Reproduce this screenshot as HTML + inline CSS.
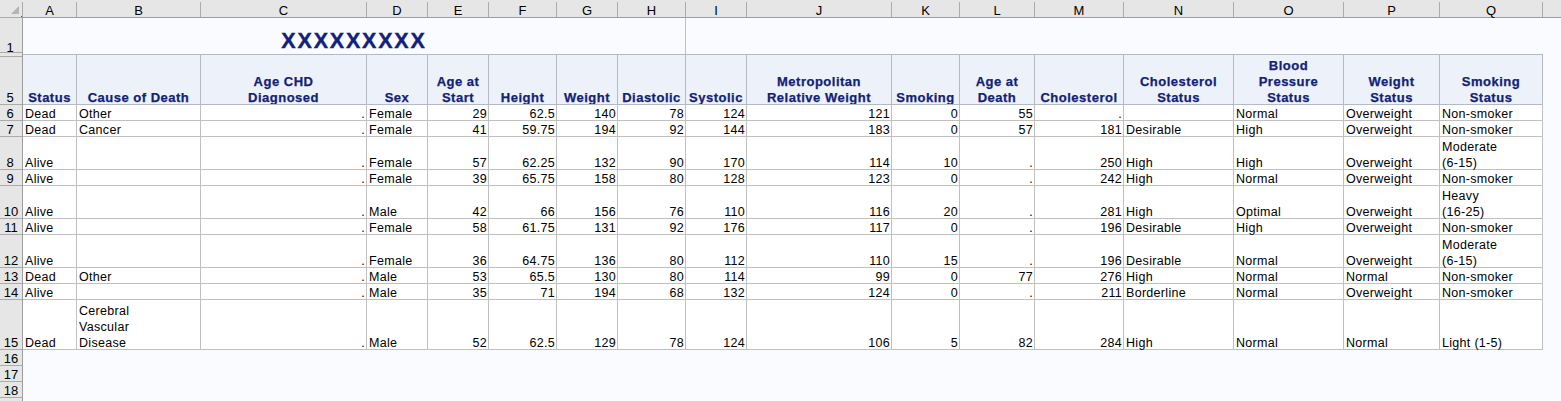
<!DOCTYPE html>
<html><head><meta charset="utf-8"><style>
html,body{margin:0;padding:0;}
body{width:1561px;height:401px;overflow:hidden;position:relative;background:#fafbfe;font-family:"Liberation Sans",sans-serif;}
div{position:absolute;}
.t{white-space:pre;line-height:20px;margin-top:-15px;}
.dat{font-size:12.5px;letter-spacing:0.3px;color:#000;transform:translateY(1px);}
.hdr{font-size:13px;letter-spacing:0.5px;color:#112277;font-weight:bold;transform:translateY(1px);-webkit-text-stroke:0.25px #112277;}
.title{font-size:21.5px;letter-spacing:1.8px;color:#112277;font-weight:bold;transform:translateY(-2px);-webkit-text-stroke:0.4px #112277;}
.lab{font-size:13px;color:#000;transform:translateY(1px);}
</style></head>
<body>
<div style="left:0px;top:0px;width:1561px;height:17px;background:#e6e6e6;"></div>
<div style="left:0px;top:17px;width:22px;height:1px;background:#ababab;"></div>
<div style="left:22px;top:17px;width:1539px;height:1px;background:#9c9c9c;"></div>
<div style="left:0px;top:18px;width:22px;height:383px;background:#e6e6e6;"></div>
<div style="left:22px;top:17px;width:1px;height:384px;background:#9c9c9c;"></div>
<div style="left:23px;top:18px;width:1538px;height:383px;background:#fafbfe;"></div>
<svg style="position:absolute;left:0;top:0" width="22" height="17"><polygon points="19,6 19,14 11,14" fill="#b4b4b4"/><rect x="21" y="16" width="1" height="1" fill="#217346"/></svg>
<div style="left:22px;top:2px;width:1px;height:15px;background:#ababab;"></div>
<div style="left:76px;top:2px;width:1px;height:15px;background:#ababab;"></div>
<div class="t lab" style="top:15px;left:-150.5px;width:400px;text-align:center;">A</div>
<div style="left:200px;top:2px;width:1px;height:15px;background:#ababab;"></div>
<div class="t lab" style="top:15px;left:-61.5px;width:400px;text-align:center;">B</div>
<div style="left:366px;top:2px;width:1px;height:15px;background:#ababab;"></div>
<div class="t lab" style="top:15px;left:83.5px;width:400px;text-align:center;">C</div>
<div style="left:427px;top:2px;width:1px;height:15px;background:#ababab;"></div>
<div class="t lab" style="top:15px;left:197.0px;width:400px;text-align:center;">D</div>
<div style="left:488px;top:2px;width:1px;height:15px;background:#ababab;"></div>
<div class="t lab" style="top:15px;left:258.0px;width:400px;text-align:center;">E</div>
<div style="left:556px;top:2px;width:1px;height:15px;background:#ababab;"></div>
<div class="t lab" style="top:15px;left:322.5px;width:400px;text-align:center;">F</div>
<div style="left:617px;top:2px;width:1px;height:15px;background:#ababab;"></div>
<div class="t lab" style="top:15px;left:387.0px;width:400px;text-align:center;">G</div>
<div style="left:685px;top:2px;width:1px;height:15px;background:#ababab;"></div>
<div class="t lab" style="top:15px;left:451.5px;width:400px;text-align:center;">H</div>
<div style="left:746px;top:2px;width:1px;height:15px;background:#ababab;"></div>
<div class="t lab" style="top:15px;left:516.0px;width:400px;text-align:center;">I</div>
<div style="left:891px;top:2px;width:1px;height:15px;background:#ababab;"></div>
<div class="t lab" style="top:15px;left:619.0px;width:400px;text-align:center;">J</div>
<div style="left:959px;top:2px;width:1px;height:15px;background:#ababab;"></div>
<div class="t lab" style="top:15px;left:725.5px;width:400px;text-align:center;">K</div>
<div style="left:1034px;top:2px;width:1px;height:15px;background:#ababab;"></div>
<div class="t lab" style="top:15px;left:797.0px;width:400px;text-align:center;">L</div>
<div style="left:1123px;top:2px;width:1px;height:15px;background:#ababab;"></div>
<div class="t lab" style="top:15px;left:879.0px;width:400px;text-align:center;">M</div>
<div style="left:1233px;top:2px;width:1px;height:15px;background:#ababab;"></div>
<div class="t lab" style="top:15px;left:978.5px;width:400px;text-align:center;">N</div>
<div style="left:1343px;top:2px;width:1px;height:15px;background:#ababab;"></div>
<div class="t lab" style="top:15px;left:1088.5px;width:400px;text-align:center;">O</div>
<div style="left:1439px;top:2px;width:1px;height:15px;background:#ababab;"></div>
<div class="t lab" style="top:15px;left:1191.5px;width:400px;text-align:center;">P</div>
<div style="left:1542px;top:2px;width:1px;height:15px;background:#ababab;"></div>
<div class="t lab" style="top:15px;left:1291.0px;width:400px;text-align:center;">Q</div>
<div style="left:0px;top:52px;width:22px;height:1px;background:#ababab;"></div>
<div style="left:0px;top:56px;width:22px;height:1px;background:#ababab;"></div>
<div class="t lab" style="top:52px;left:-190px;width:400px;text-align:center;">1</div>
<div style="left:0px;top:104px;width:22px;height:1px;background:#ababab;"></div>
<div class="t lab" style="top:102px;left:-190px;width:400px;text-align:center;">5</div>
<div style="left:0px;top:120px;width:22px;height:1px;background:#ababab;"></div>
<div class="t lab" style="top:118px;left:-190px;width:400px;text-align:center;">6</div>
<div style="left:0px;top:136px;width:22px;height:1px;background:#ababab;"></div>
<div class="t lab" style="top:134px;left:-190px;width:400px;text-align:center;">7</div>
<div style="left:0px;top:169px;width:22px;height:1px;background:#ababab;"></div>
<div class="t lab" style="top:167px;left:-190px;width:400px;text-align:center;">8</div>
<div style="left:0px;top:185px;width:22px;height:1px;background:#ababab;"></div>
<div class="t lab" style="top:183px;left:-190px;width:400px;text-align:center;">9</div>
<div style="left:0px;top:218px;width:22px;height:1px;background:#ababab;"></div>
<div class="t lab" style="top:216px;left:-189px;width:400px;text-align:center;">10</div>
<div style="left:0px;top:234px;width:22px;height:1px;background:#ababab;"></div>
<div class="t lab" style="top:232px;left:-189px;width:400px;text-align:center;">11</div>
<div style="left:0px;top:267px;width:22px;height:1px;background:#ababab;"></div>
<div class="t lab" style="top:265px;left:-189px;width:400px;text-align:center;">12</div>
<div style="left:0px;top:283px;width:22px;height:1px;background:#ababab;"></div>
<div class="t lab" style="top:281px;left:-189px;width:400px;text-align:center;">13</div>
<div style="left:0px;top:299px;width:22px;height:1px;background:#ababab;"></div>
<div class="t lab" style="top:297px;left:-189px;width:400px;text-align:center;">14</div>
<div style="left:0px;top:349px;width:22px;height:1px;background:#ababab;"></div>
<div class="t lab" style="top:347px;left:-189px;width:400px;text-align:center;">15</div>
<div style="left:0px;top:365px;width:22px;height:1px;background:#ababab;"></div>
<div class="t lab" style="top:363px;left:-189px;width:400px;text-align:center;">16</div>
<div style="left:0px;top:381px;width:22px;height:1px;background:#ababab;"></div>
<div class="t lab" style="top:379px;left:-189px;width:400px;text-align:center;">17</div>
<div style="left:0px;top:397px;width:22px;height:1px;background:#ababab;"></div>
<div class="t lab" style="top:395px;left:-189px;width:400px;text-align:center;">18</div>
<div style="left:23px;top:18px;width:1519px;height:36px;background:#fafbfe;"></div>
<div style="left:23px;top:54px;width:1520px;height:1px;background:#b3bac1;"></div>
<div style="left:685px;top:18px;width:1px;height:36px;background:#c0c0c0;"></div>
<div class="t title" style="top:48px;left:154.0px;width:400px;text-align:center;">XXXXXXXXX</div>
<div style="left:23px;top:55px;width:1519px;height:49px;background:#edf1f9;"></div>
<div class="t hdr" style="top:102px;left:-150.5px;width:400px;text-align:center;">Status</div>
<div class="t hdr" style="top:102px;left:-61.5px;width:400px;text-align:center;">Cause of Death</div>
<div class="t hdr" style="top:86px;left:83.5px;width:400px;text-align:center;">Age CHD</div>
<div class="t hdr" style="top:102px;left:83.5px;width:400px;text-align:center;">Diagnosed</div>
<div class="t hdr" style="top:102px;left:197.0px;width:400px;text-align:center;">Sex</div>
<div class="t hdr" style="top:86px;left:258.0px;width:400px;text-align:center;">Age at</div>
<div class="t hdr" style="top:102px;left:258.0px;width:400px;text-align:center;">Start</div>
<div class="t hdr" style="top:102px;left:322.5px;width:400px;text-align:center;">Height</div>
<div class="t hdr" style="top:102px;left:387.0px;width:400px;text-align:center;">Weight</div>
<div class="t hdr" style="top:102px;left:451.5px;width:400px;text-align:center;">Diastolic</div>
<div class="t hdr" style="top:102px;left:516.0px;width:400px;text-align:center;">Systolic</div>
<div class="t hdr" style="top:86px;left:619.0px;width:400px;text-align:center;">Metropolitan</div>
<div class="t hdr" style="top:102px;left:619.0px;width:400px;text-align:center;">Relative Weight</div>
<div class="t hdr" style="top:102px;left:725.5px;width:400px;text-align:center;">Smoking</div>
<div class="t hdr" style="top:86px;left:797.0px;width:400px;text-align:center;">Age at</div>
<div class="t hdr" style="top:102px;left:797.0px;width:400px;text-align:center;">Death</div>
<div class="t hdr" style="top:102px;left:879.0px;width:400px;text-align:center;">Cholesterol</div>
<div class="t hdr" style="top:86px;left:978.5px;width:400px;text-align:center;">Cholesterol</div>
<div class="t hdr" style="top:102px;left:978.5px;width:400px;text-align:center;">Status</div>
<div class="t hdr" style="top:70px;left:1088.5px;width:400px;text-align:center;">Blood</div>
<div class="t hdr" style="top:86px;left:1088.5px;width:400px;text-align:center;">Pressure</div>
<div class="t hdr" style="top:102px;left:1088.5px;width:400px;text-align:center;">Status</div>
<div class="t hdr" style="top:86px;left:1191.5px;width:400px;text-align:center;">Weight</div>
<div class="t hdr" style="top:102px;left:1191.5px;width:400px;text-align:center;">Status</div>
<div class="t hdr" style="top:86px;left:1291.0px;width:400px;text-align:center;">Smoking</div>
<div class="t hdr" style="top:102px;left:1291.0px;width:400px;text-align:center;">Status</div>
<div style="left:23px;top:105px;width:1519px;height:244px;background:#ffffff;"></div>
<div style="left:23px;top:120px;width:1520px;height:1px;background:#c0c0c0;"></div>
<div style="left:23px;top:136px;width:1520px;height:1px;background:#c0c0c0;"></div>
<div style="left:23px;top:169px;width:1520px;height:1px;background:#c0c0c0;"></div>
<div style="left:23px;top:185px;width:1520px;height:1px;background:#c0c0c0;"></div>
<div style="left:23px;top:218px;width:1520px;height:1px;background:#c0c0c0;"></div>
<div style="left:23px;top:234px;width:1520px;height:1px;background:#c0c0c0;"></div>
<div style="left:23px;top:267px;width:1520px;height:1px;background:#c0c0c0;"></div>
<div style="left:23px;top:283px;width:1520px;height:1px;background:#c0c0c0;"></div>
<div style="left:23px;top:299px;width:1520px;height:1px;background:#c0c0c0;"></div>
<div style="left:23px;top:349px;width:1520px;height:1px;background:#c0c0c0;"></div>
<div style="left:76px;top:105px;width:1px;height:244px;background:#c0c0c0;"></div>
<div style="left:76px;top:55px;width:1px;height:49px;background:#b3bac1;"></div>
<div style="left:200px;top:105px;width:1px;height:244px;background:#c0c0c0;"></div>
<div style="left:200px;top:55px;width:1px;height:49px;background:#b3bac1;"></div>
<div style="left:366px;top:105px;width:1px;height:244px;background:#c0c0c0;"></div>
<div style="left:366px;top:55px;width:1px;height:49px;background:#b3bac1;"></div>
<div style="left:427px;top:105px;width:1px;height:244px;background:#c0c0c0;"></div>
<div style="left:427px;top:55px;width:1px;height:49px;background:#b3bac1;"></div>
<div style="left:488px;top:105px;width:1px;height:244px;background:#c0c0c0;"></div>
<div style="left:488px;top:55px;width:1px;height:49px;background:#b3bac1;"></div>
<div style="left:556px;top:105px;width:1px;height:244px;background:#c0c0c0;"></div>
<div style="left:556px;top:55px;width:1px;height:49px;background:#b3bac1;"></div>
<div style="left:617px;top:105px;width:1px;height:244px;background:#c0c0c0;"></div>
<div style="left:617px;top:55px;width:1px;height:49px;background:#b3bac1;"></div>
<div style="left:685px;top:105px;width:1px;height:244px;background:#c0c0c0;"></div>
<div style="left:685px;top:55px;width:1px;height:49px;background:#b3bac1;"></div>
<div style="left:746px;top:105px;width:1px;height:244px;background:#c0c0c0;"></div>
<div style="left:746px;top:55px;width:1px;height:49px;background:#b3bac1;"></div>
<div style="left:891px;top:105px;width:1px;height:244px;background:#c0c0c0;"></div>
<div style="left:891px;top:55px;width:1px;height:49px;background:#b3bac1;"></div>
<div style="left:959px;top:105px;width:1px;height:244px;background:#c0c0c0;"></div>
<div style="left:959px;top:55px;width:1px;height:49px;background:#b3bac1;"></div>
<div style="left:1034px;top:105px;width:1px;height:244px;background:#c0c0c0;"></div>
<div style="left:1034px;top:55px;width:1px;height:49px;background:#b3bac1;"></div>
<div style="left:1123px;top:105px;width:1px;height:244px;background:#c0c0c0;"></div>
<div style="left:1123px;top:55px;width:1px;height:49px;background:#b3bac1;"></div>
<div style="left:1233px;top:105px;width:1px;height:244px;background:#c0c0c0;"></div>
<div style="left:1233px;top:55px;width:1px;height:49px;background:#b3bac1;"></div>
<div style="left:1343px;top:105px;width:1px;height:244px;background:#c0c0c0;"></div>
<div style="left:1343px;top:55px;width:1px;height:49px;background:#b3bac1;"></div>
<div style="left:1439px;top:105px;width:1px;height:244px;background:#c0c0c0;"></div>
<div style="left:1439px;top:55px;width:1px;height:49px;background:#b3bac1;"></div>
<div style="left:1542px;top:105px;width:1px;height:244px;background:#c0c0c0;"></div>
<div style="left:1542px;top:55px;width:1px;height:49px;background:#b3bac1;"></div>
<div style="left:23px;top:104px;width:1520px;height:1px;background:#b3bac1;"></div>
<div class="t dat" style="top:118px;left:25px;">Dead</div>
<div class="t dat" style="top:118px;left:79px;">Other</div>
<div class="t dat" style="top:118px;right:1196px;">.</div>
<div class="t dat" style="top:118px;left:369px;">Female</div>
<div class="t dat" style="top:118px;right:1074px;">29</div>
<div class="t dat" style="top:118px;right:1006px;">62.5</div>
<div class="t dat" style="top:118px;right:945px;">140</div>
<div class="t dat" style="top:118px;right:877px;">78</div>
<div class="t dat" style="top:118px;right:816px;">124</div>
<div class="t dat" style="top:118px;right:671px;">121</div>
<div class="t dat" style="top:118px;right:603px;">0</div>
<div class="t dat" style="top:118px;right:528px;">55</div>
<div class="t dat" style="top:118px;right:439px;">.</div>
<div class="t dat" style="top:118px;left:1236px;">Normal</div>
<div class="t dat" style="top:118px;left:1346px;">Overweight</div>
<div class="t dat" style="top:118px;left:1442px;">Non-smoker</div>
<div class="t dat" style="top:134px;left:25px;">Dead</div>
<div class="t dat" style="top:134px;left:79px;">Cancer</div>
<div class="t dat" style="top:134px;right:1196px;">.</div>
<div class="t dat" style="top:134px;left:369px;">Female</div>
<div class="t dat" style="top:134px;right:1074px;">41</div>
<div class="t dat" style="top:134px;right:1006px;">59.75</div>
<div class="t dat" style="top:134px;right:945px;">194</div>
<div class="t dat" style="top:134px;right:877px;">92</div>
<div class="t dat" style="top:134px;right:816px;">144</div>
<div class="t dat" style="top:134px;right:671px;">183</div>
<div class="t dat" style="top:134px;right:603px;">0</div>
<div class="t dat" style="top:134px;right:528px;">57</div>
<div class="t dat" style="top:134px;right:439px;">181</div>
<div class="t dat" style="top:134px;left:1126px;">Desirable</div>
<div class="t dat" style="top:134px;left:1236px;">High</div>
<div class="t dat" style="top:134px;left:1346px;">Overweight</div>
<div class="t dat" style="top:134px;left:1442px;">Non-smoker</div>
<div class="t dat" style="top:167px;left:25px;">Alive</div>
<div class="t dat" style="top:167px;right:1196px;">.</div>
<div class="t dat" style="top:167px;left:369px;">Female</div>
<div class="t dat" style="top:167px;right:1074px;">57</div>
<div class="t dat" style="top:167px;right:1006px;">62.25</div>
<div class="t dat" style="top:167px;right:945px;">132</div>
<div class="t dat" style="top:167px;right:877px;">90</div>
<div class="t dat" style="top:167px;right:816px;">170</div>
<div class="t dat" style="top:167px;right:671px;">114</div>
<div class="t dat" style="top:167px;right:603px;">10</div>
<div class="t dat" style="top:167px;right:528px;">.</div>
<div class="t dat" style="top:167px;right:439px;">250</div>
<div class="t dat" style="top:167px;left:1126px;">High</div>
<div class="t dat" style="top:167px;left:1236px;">High</div>
<div class="t dat" style="top:167px;left:1346px;">Overweight</div>
<div class="t dat" style="top:151px;left:1442px;">Moderate</div>
<div class="t dat" style="top:167px;left:1442px;">(6-15)</div>
<div class="t dat" style="top:183px;left:25px;">Alive</div>
<div class="t dat" style="top:183px;right:1196px;">.</div>
<div class="t dat" style="top:183px;left:369px;">Female</div>
<div class="t dat" style="top:183px;right:1074px;">39</div>
<div class="t dat" style="top:183px;right:1006px;">65.75</div>
<div class="t dat" style="top:183px;right:945px;">158</div>
<div class="t dat" style="top:183px;right:877px;">80</div>
<div class="t dat" style="top:183px;right:816px;">128</div>
<div class="t dat" style="top:183px;right:671px;">123</div>
<div class="t dat" style="top:183px;right:603px;">0</div>
<div class="t dat" style="top:183px;right:528px;">.</div>
<div class="t dat" style="top:183px;right:439px;">242</div>
<div class="t dat" style="top:183px;left:1126px;">High</div>
<div class="t dat" style="top:183px;left:1236px;">Normal</div>
<div class="t dat" style="top:183px;left:1346px;">Overweight</div>
<div class="t dat" style="top:183px;left:1442px;">Non-smoker</div>
<div class="t dat" style="top:216px;left:25px;">Alive</div>
<div class="t dat" style="top:216px;right:1196px;">.</div>
<div class="t dat" style="top:216px;left:369px;">Male</div>
<div class="t dat" style="top:216px;right:1074px;">42</div>
<div class="t dat" style="top:216px;right:1006px;">66</div>
<div class="t dat" style="top:216px;right:945px;">156</div>
<div class="t dat" style="top:216px;right:877px;">76</div>
<div class="t dat" style="top:216px;right:816px;">110</div>
<div class="t dat" style="top:216px;right:671px;">116</div>
<div class="t dat" style="top:216px;right:603px;">20</div>
<div class="t dat" style="top:216px;right:528px;">.</div>
<div class="t dat" style="top:216px;right:439px;">281</div>
<div class="t dat" style="top:216px;left:1126px;">High</div>
<div class="t dat" style="top:216px;left:1236px;">Optimal</div>
<div class="t dat" style="top:216px;left:1346px;">Overweight</div>
<div class="t dat" style="top:200px;left:1442px;">Heavy</div>
<div class="t dat" style="top:216px;left:1442px;">(16-25)</div>
<div class="t dat" style="top:232px;left:25px;">Alive</div>
<div class="t dat" style="top:232px;right:1196px;">.</div>
<div class="t dat" style="top:232px;left:369px;">Female</div>
<div class="t dat" style="top:232px;right:1074px;">58</div>
<div class="t dat" style="top:232px;right:1006px;">61.75</div>
<div class="t dat" style="top:232px;right:945px;">131</div>
<div class="t dat" style="top:232px;right:877px;">92</div>
<div class="t dat" style="top:232px;right:816px;">176</div>
<div class="t dat" style="top:232px;right:671px;">117</div>
<div class="t dat" style="top:232px;right:603px;">0</div>
<div class="t dat" style="top:232px;right:528px;">.</div>
<div class="t dat" style="top:232px;right:439px;">196</div>
<div class="t dat" style="top:232px;left:1126px;">Desirable</div>
<div class="t dat" style="top:232px;left:1236px;">High</div>
<div class="t dat" style="top:232px;left:1346px;">Overweight</div>
<div class="t dat" style="top:232px;left:1442px;">Non-smoker</div>
<div class="t dat" style="top:265px;left:25px;">Alive</div>
<div class="t dat" style="top:265px;right:1196px;">.</div>
<div class="t dat" style="top:265px;left:369px;">Female</div>
<div class="t dat" style="top:265px;right:1074px;">36</div>
<div class="t dat" style="top:265px;right:1006px;">64.75</div>
<div class="t dat" style="top:265px;right:945px;">136</div>
<div class="t dat" style="top:265px;right:877px;">80</div>
<div class="t dat" style="top:265px;right:816px;">112</div>
<div class="t dat" style="top:265px;right:671px;">110</div>
<div class="t dat" style="top:265px;right:603px;">15</div>
<div class="t dat" style="top:265px;right:528px;">.</div>
<div class="t dat" style="top:265px;right:439px;">196</div>
<div class="t dat" style="top:265px;left:1126px;">Desirable</div>
<div class="t dat" style="top:265px;left:1236px;">Normal</div>
<div class="t dat" style="top:265px;left:1346px;">Overweight</div>
<div class="t dat" style="top:249px;left:1442px;">Moderate</div>
<div class="t dat" style="top:265px;left:1442px;">(6-15)</div>
<div class="t dat" style="top:281px;left:25px;">Dead</div>
<div class="t dat" style="top:281px;left:79px;">Other</div>
<div class="t dat" style="top:281px;right:1196px;">.</div>
<div class="t dat" style="top:281px;left:369px;">Male</div>
<div class="t dat" style="top:281px;right:1074px;">53</div>
<div class="t dat" style="top:281px;right:1006px;">65.5</div>
<div class="t dat" style="top:281px;right:945px;">130</div>
<div class="t dat" style="top:281px;right:877px;">80</div>
<div class="t dat" style="top:281px;right:816px;">114</div>
<div class="t dat" style="top:281px;right:671px;">99</div>
<div class="t dat" style="top:281px;right:603px;">0</div>
<div class="t dat" style="top:281px;right:528px;">77</div>
<div class="t dat" style="top:281px;right:439px;">276</div>
<div class="t dat" style="top:281px;left:1126px;">High</div>
<div class="t dat" style="top:281px;left:1236px;">Normal</div>
<div class="t dat" style="top:281px;left:1346px;">Normal</div>
<div class="t dat" style="top:281px;left:1442px;">Non-smoker</div>
<div class="t dat" style="top:297px;left:25px;">Alive</div>
<div class="t dat" style="top:297px;right:1196px;">.</div>
<div class="t dat" style="top:297px;left:369px;">Male</div>
<div class="t dat" style="top:297px;right:1074px;">35</div>
<div class="t dat" style="top:297px;right:1006px;">71</div>
<div class="t dat" style="top:297px;right:945px;">194</div>
<div class="t dat" style="top:297px;right:877px;">68</div>
<div class="t dat" style="top:297px;right:816px;">132</div>
<div class="t dat" style="top:297px;right:671px;">124</div>
<div class="t dat" style="top:297px;right:603px;">0</div>
<div class="t dat" style="top:297px;right:528px;">.</div>
<div class="t dat" style="top:297px;right:439px;">211</div>
<div class="t dat" style="top:297px;left:1126px;">Borderline</div>
<div class="t dat" style="top:297px;left:1236px;">Normal</div>
<div class="t dat" style="top:297px;left:1346px;">Overweight</div>
<div class="t dat" style="top:297px;left:1442px;">Non-smoker</div>
<div class="t dat" style="top:347px;left:25px;">Dead</div>
<div class="t dat" style="top:315px;left:79px;">Cerebral</div>
<div class="t dat" style="top:331px;left:79px;">Vascular</div>
<div class="t dat" style="top:347px;left:79px;">Disease</div>
<div class="t dat" style="top:347px;right:1196px;">.</div>
<div class="t dat" style="top:347px;left:369px;">Male</div>
<div class="t dat" style="top:347px;right:1074px;">52</div>
<div class="t dat" style="top:347px;right:1006px;">62.5</div>
<div class="t dat" style="top:347px;right:945px;">129</div>
<div class="t dat" style="top:347px;right:877px;">78</div>
<div class="t dat" style="top:347px;right:816px;">124</div>
<div class="t dat" style="top:347px;right:671px;">106</div>
<div class="t dat" style="top:347px;right:603px;">5</div>
<div class="t dat" style="top:347px;right:528px;">82</div>
<div class="t dat" style="top:347px;right:439px;">284</div>
<div class="t dat" style="top:347px;left:1126px;">High</div>
<div class="t dat" style="top:347px;left:1236px;">Normal</div>
<div class="t dat" style="top:347px;left:1346px;">Normal</div>
<div class="t dat" style="top:347px;left:1442px;">Light (1-5)</div>
</body></html>
